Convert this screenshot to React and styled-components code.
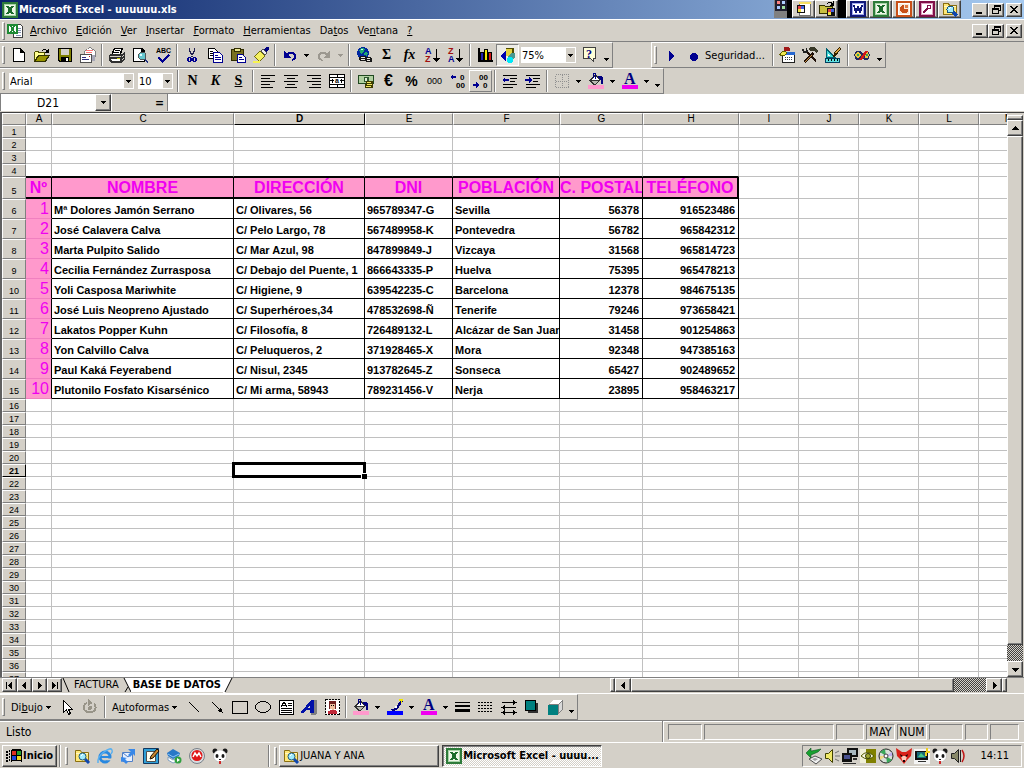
import styled, { createGlobalStyle, css } from 'styled-components'

const GlobalStyle = createGlobalStyle`
    * {
        box-sizing: border-box;
    }

    body {
        margin: 0;
        overflow: hidden;
        background: #d4d0c8;
        font-family: 'DejaVu Sans Condensed', 'DejaVu Sans', sans-serif;
        font-size: 11px;
        color: #000;
    }

    button, input, select {
        font: inherit;
        color: inherit;
        margin: 0;
        padding: 0;
        border: 0;
        border-radius: 0;
        background: transparent;
        outline: none;
    }
`

const raised = css`
    border: 1px solid;
    border-color: #fff #404040 #404040 #fff;
    box-shadow: inset -1px -1px 0 #808080;
`

const sunken = css`
    border: 1px solid;
    border-color: #808080 #fff #fff #808080;
`

const checker = css`
    background: repeating-conic-gradient(${(p) => p.$ink || '#404040'} 0 25%, ${(p) => p.$paper || '#d4d0c8'} 0 50%) 0 0 / 2px 2px;
`

const bucket = (
    <>
        <path d="M1 7l6-6 6 5-6 6H5z" fill="#303030" />
        <path d="M3 7l4-4 4 3-1 1z" fill="#fff" />
        <path d="M3 8h7l-3 3H6z" fill="#b8b8b0" />
        <path d="M5 0h3v6H7V1H6v4H5z" fill="#000080" />
        <path d="M10 3h3l2 2v6h-2V7l-3-2z" fill="#000080" />
    </>
)

const folderLens = (
    <>
        <path d="M1.500 2.500h5l1 2h7v9h-13z" fill="#ffe878" stroke="#8c7010" />
        <path d="M2 5h12v1H2z" fill="#fff8c8" />
        <path d="M11 11l4 4" stroke="#1048b0" strokeWidth="3" />
        <circle cx="8.500" cy="8.500" r="3.500" fill="#a0ecff" stroke="#205878" />
        <path d="M7 8l2-2" stroke="#fff" />
    </>
)

const art = {
    folderLens,
    excel: (
        <>
            <path d="M0 0h16v16H0z" fill="#2e7b3a" />
            <path d="M2.500 2.500h11v11h-11z" fill="#eef6e8" stroke="#a8d4a8" />
            <path d="M4 4h3l5 8H9z" fill="#1c6b2c" />
            <path d="M9 4h3l-5 8H4z" fill="#1c6b2c" />
        </>
    ),
    doc: (
        <>
            <path d="M6.500 1.500h7l2 2v11h-9z" fill="#fff" stroke="#404040" />
            <path d="M11 5h3v1h-3zM11 7h3v1h-3zM11 9h3v1h-3zM9 12h5v1H9z" fill="#8090b0" />
            <path d="M0 1h11v10H0z" fill="#1e8a34" />
            <path d="M2 3h7v6H2z" fill="#fff" />
            <path d="M3 3h2l3 6H6zM6 3h2L5 9H3z" fill="#1e8a34" />
        </>
    ),
    new: (
        <>
            <path d="M3 2h7l3 3v9H3z" fill="#fff" />
            <path d="M2 1h8v1h1v1h1v1h1v1h1v10H2zM3 2v12h10V6H9V2z" fill="#000" fillRule="evenodd" />
        </>
    ),
    open: (
        <>
            <path d="M0 5h1V4h4v1h6v4H4l-3 6H0z" fill="#505000" />
            <path d="M1 5h3v1h6v2H4l-3 5z" fill="#ffff90" />
            <path d="M4 8h12l-4 7H0z" fill="#303000" />
            <path d="M5 9h9l-3 5H2z" fill="#989400" />
            <path d="M8 3h1V2h3v1h1v1h-1V3H9v1H8z" fill="#000" />
            <path d="M15 1v5h-4v-1h1V4h1V3h1V2z" fill="#000" />
        </>
    ),
    save: (
        <>
            <path d="M1 1h14v14H2l-1-1z" fill="#000" />
            <path d="M2 2h12v12H3l-1-1z" fill="#808000" />
            <path d="M4 2h8v6H4z" fill="#d4d0c8" />
            <path d="M4 10h8v4H4z" fill="#000" />
            <path d="M9 11h2v3H9z" fill="#fff" />
        </>
    ),
    mail: (
        <>
            <path d="M4 4l6-4 6 4v6H4z" fill="#808080" />
            <path d="M5 4l5-3 5 3v5H5z" fill="#fff" />
            <path d="M6 3h7v1H6zM6 5h6v1H6z" fill="#ff7878" />
            <path d="M0 7h12v9H0z" fill="#505050" />
            <path d="M1 8h10v7H1z" fill="#fff" />
            <path d="M2 10h4v1H2zM2 12h7v1H2z" fill="#303080" />
            <path d="M9 9h1v1H9z" fill="#c02020" />
            <path d="M12 8h3v6h-3z" fill="#a8a8b8" />
        </>
    ),
    print: (
        <>
            <path d="M5 1h9l-2 7H2z" fill="#000" />
            <path d="M6 2h6l-1 5H4z" fill="#fff" />
            <path d="M6 3h5v1H6zM5 5h5v1H5z" fill="#000" />
            <path d="M0 8l2-1h11l2-2 1 1v6l-3 4H2l-2-3z" fill="#303030" />
            <path d="M1 9h11v1H1z" fill="#d4d0c8" />
            <path d="M2 12h9v2H3z" fill="#fff" />
            <path d="M8 11h3v1H8z" fill="#d0d000" />
            <path d="M13 9l2-2v1l-2 2zM13 12l2-2v1l-2 2z" fill="#d4d0c8" />
        </>
    ),
    preview: (
        <>
            <path d="M1 1h9l3 3v11H1z" fill="#000" />
            <path d="M2 2h7v3h3v9H2z" fill="#fff" />
            <path d="M12 11l4 4-1 1-4-4z" fill="#203080" />
            <path d="M8 5h4l2 2v4l-2 2H8l-2-2V7z" fill="#505858" />
            <path d="M8 6h4l1 1v4l-1 1H8l-1-1V7z" fill="#68c8d0" />
            <path d="M8 7h2v2H8z" fill="#e0ffff" />
        </>
    ),
    spell: <path d="M2 11l2-1 3 3 6-6 2 1-8 8z" fill="#000090" />,
    cut: (
        <>
            <path d="M5 1h1v3h1v2h1v2h1v2H8V9H7V7H6V5H5zM11 1h-1v3H9v2H8v2H7v2h1V9h1V7h1V5h1z" fill="#202050" />
            <path d="M4 10h3v1h1v3H7v1H4v-1H3v-3h1zM5 11v3h1v-3zM9 10h3v1h1v3h-1v1H9v-1H8v-3h1zM10 11v3h1v-3z" fill="#000090" fillRule="evenodd" />
        </>
    ),
    copy: (
        <>
            <path d="M1.500 1.500h6l3 3v7h-9z" fill="#fff" stroke="#000" />
            <path d="M3 4h3v1H3zM3 6h5v1H3zM3 8h5v1H3z" fill="#000" />
            <path d="M6.500 5.500h6l3 3v7h-9z" fill="#fff" stroke="#000090" />
            <path d="M8 8h3v1H8zM8 10h6v1H8zM8 12h6v1H8z" fill="#000090" />
        </>
    ),
    paste: (
        <>
            <path d="M1 2h13v12H1z" fill="#302c00" />
            <path d="M2 3h11v10H2z" fill="#787020" />
            <path d="M4 1h7v4H4z" fill="#302c00" />
            <path d="M5 2h5v2H5z" fill="#e8e490" />
            <path d="M7.500 7.500h5l3 3v5h-8z" fill="#fff" stroke="#000090" />
            <path d="M9 10h3v1H9zM9 12h5v1H9z" fill="#000090" />
        </>
    ),
    brush: (
        <>
            <path d="M1 9l6-5 5 5-6 6z" fill="#706c10" />
            <path d="M2 9l5-4 4 4-5 5z" fill="#f4f060" />
            <path d="M7 4l3-2 4 4-2 3z" fill="#505050" />
            <path d="M8 4l2-1 3 3-1 2z" fill="#f0f0f0" />
            <path d="M11 3l2-3h3v2l-3 3z" fill="#000080" />
            <path d="M0 14h7v2H0z" fill="#f8f450" />
        </>
    ),
    undo: <path d="M2 4v7h7l-3-3c2-2 6-1 6 1 0 2-1 3-3 4l1 1c4-1 5-4 4-6-1-3-6-5-9-2z" fill="#000090" />,
    redo: <path d="M14 4v7H7l3-3c-2-2-6-1-6 1 0 2 1 3 3 4l-1 1C2 13 1 10 2 8c1-3 6-5 9-2z" fill="#9c9890" />,
    globe: (
        <>
            <circle cx="7" cy="6" r="6" fill="#0028a0" />
            <path d="M3 3l3-2 3 1-1 3-3 2zM9 5l3 1-1 3-3-1z" fill="#20a870" />
            <path d="M5 2h2v1H5z" fill="#c0ffff" />
            <path d="M4 9h6v1h5v1h1v4h-6v-1H4v-1H3v-3h1z" fill="#181818" />
            <path d="M5 10h4v1H5zM5 12h4v1H5zM11 11h3v1h-3zM11 13h3v1h-3z" fill="#e8e4dc" />
        </>
    ),
    chart: (
        <>
            <path d="M1 1h2v12h13v2H1z" fill="#000" />
            <path d="M3 5h4v8H3zM7 2h4v11H7zM11 5h4v8h-4z" fill="#000" />
            <path d="M4 6h2v7H4z" fill="#2020b0" />
            <path d="M8 3h2v10H8z" fill="#f0e800" />
            <path d="M12 6h2v7h-2z" fill="#d01818" />
        </>
    ),
    drawing: (
        <>
            <path d="M6 1h8v8H6z" fill="#504c00" />
            <path d="M6 2h6v7H6z" fill="#e0d040" />
            <path d="M0 9l6-6v12z" fill="#0000b0" />
            <path d="M8 9l3-3h4v4l-3 3H8z" fill="#489890" />
            <circle cx="10" cy="13" r="3" fill="#00e8f8" />
        </>
    ),
    help: (
        <>
            <path d="M1 0h13v12h-2v4l-4-4H1z" fill="#404040" />
            <path d="M2 1h11v10h-2v3l-3-3H2z" fill="#ffffd8" />
        </>
    ),
    play: <path d="M6 4l5 5-5 5z" fill="#000090" />,
    dot: <circle cx="8" cy="10" r="4" fill="#000090" />,
    controls: (
        <>
            <path d="M3 5h13v11H3z" fill="#202020" />
            <path d="M4 6h11v9H4z" fill="#fff" />
            <path d="M4 5h12v3H4z" fill="#2868d0" />
            <path d="M6 10h1v1H6zM8 10h1v1H8zM10 10h1v1h-1zM12 10h1v1h-1zM6 12h1v1H6zM8 12h1v1H8zM10 12h1v1h-1zM12 12h1v1h-1z" fill="#404040" />
            <path d="M5 0h5v1h1v3H5z" fill="#a01818" />
            <path d="M0 7l3-3h4l1 2-3 3H1z" fill="#605c00" />
            <path d="M1 7l2-2h3l1 1-2 2H2z" fill="#f0e850" />
        </>
    ),
    tools: (
        <>
            <path d="M1 14l9-9 2 2-9 9zM3 4l2-1 9 10v2h-1z" fill="#201008" />
            <path d="M3 14l7-7v1l-7 7z" fill="#c89040" />
            <path d="M6 2l2-2h5l3 4-1 3-3-3h-3z" fill="#383828" />
            <path d="M0 2h2v2h2V1h1l1 3-2 2H1z" fill="#202020" />
        </>
    ),
    design: (
        <>
            <path d="M1 0l10 11H1z" fill="#006070" />
            <path d="M2 3l6 7H2z" fill="#40d8d8" />
            <path d="M3 7l2 2H3z" fill="#fff" />
            <path d="M0 11h15v5H0z" fill="#004060" />
            <path d="M1 12h13v3H1z" fill="#60e0e0" />
            <path d="M3 12h1v2H3zM6 12h1v2H6zM9 12h1v2H9zM12 12h1v2h-1z" fill="#000" />
            <path d="M8 10l1-4 5-6 2 2-5 7z" fill="#302000" />
            <path d="M10 6l4-5 1 1-4 5z" fill="#d8a040" />
        </>
    ),
    script: (
        <>
            <path d="M0 8l2-4h4l3 3 3-3h2l2 4-2 5h-4l-3-3-2 3H2z" fill="#202860" />
            <path d="M1 8l2-3h2l2 3-2 3H3zM11 8l1-3h2l1 3-1 3h-3z" fill="#e8c840" />
            <path d="M5 13l6-9h3l-6 9z" fill="#d01818" />
            <path d="M3 7h2v2H3zM12 7h2v2h-2z" fill="#30a060" />
        </>
    ),
    left: <path d="M1 2.500h14M1 5.500h9M1 8.500h14M1 11.500h9M1 14.500h12" stroke="#000" />,
    center: <path d="M1 2.500h14M4 5.500h8M1 8.500h14M4 11.500h8M2 14.500h12" stroke="#000" />,
    right: <path d="M1 2.500h14M6 5.500h9M1 8.500h14M6 11.500h9M3 14.500h12" stroke="#000" />,
    merge: (
        <>
            <path d="M.5 1.500h15v13H.5z" fill="#fff" stroke="#000" />
            <path d="M1 4.500h15M1 11.500h15M8.500 2v2M8.500 12v2" stroke="#000" />
            <path d="M1 7h2V6h1v1h1v1H4v2H3V8H1zM15 7h-2V6h-1v1h-1v1h1v2h1V8h2z" fill="#000" />
        </>
    ),
    money: (
        <>
            <path d="M0 2h16v9H0z" fill="#204820" />
            <path d="M1 3h14v7H1z" fill="#b0d0a0" />
            <path d="M6 4h5v5H6z" fill="#305830" />
            <path d="M7 5h2v3H7z" fill="#e0f0d8" />
            <path d="M8 8h7v7H7v-4h1z" fill="#403c00" />
            <path d="M9 9h4v1H9zM9 11h5v1H9zM8 13h5v1H8z" fill="#f0e860" />
        </>
    ),
    incDec: <path d="M0 4l3-3v2h3v2H3v2z" fill="#000090" />,
    decDec: <path d="M6 12L3 9v2H0v2h3v2z" fill="#000090" />,
    outdent: (
        <>
            <path d="M1 2.500h14M8 5.500h7M8 8.500h5M1 11.500h14M1 14.500h10" stroke="#000" />
            <path d="M0 7l3-3v2h4v2H3v2z" fill="#000090" />
        </>
    ),
    indent: (
        <>
            <path d="M1 2.500h14M8 5.500h7M8 8.500h5M1 11.500h14M1 14.500h10" stroke="#000" />
            <path d="M7 7L4 4v2H0v2h4v2z" fill="#000090" />
        </>
    ),
    borders: <path d="M1.500 1.500h13v13h-13zM8.500 2v12M2 8.500h12" fill="none" stroke="#909090" strokeDasharray="1 1" />,
    fill: (
        <>
            {bucket}
            <path d="M0 12h16v4H0z" fill="#ff99cc" />
        </>
    ),
    fontColor: <path d="M0 12h16v4H0z" fill="#f000f0" />,
    lineColor: (
        <>
            <path d="M3 11l5-2 6-8 2 1-6 9-4 1z" fill="#000080" />
            <path d="M8 7h2v2H8z" fill="#fff" />
            <path d="M12 0h4v2h-1v2h-1V2h-2z" fill="#f0e800" />
            <path d="M0 12h16v4H0z" fill="#0000ff" />
        </>
    ),
    cursor: <path d="M4.500 1.500v12l3-3 2 5 2-1-2-4h4z" fill="#fff" stroke="#000" />,
    rotate: (
        <>
            <path d="M5 4a6 5 0 1 0 7 1" fill="none" stroke="#989488" strokeWidth="2" />
            <path d="M6 0l5 4-5 3z" fill="#989488" />
            <circle cx="8" cy="9" r="2" fill="#989488" />
        </>
    ),
    line: <path d="M3 3l10 10" stroke="#000" />,
    arrow: (
        <>
            <path d="M3 3l8 8" stroke="#000" />
            <path d="M14 14l-6-2 4-4z" fill="#000" />
        </>
    ),
    rect: <path d="M.5 2.500h15v12H.5z" fill="none" stroke="#000" />,
    oval: <ellipse cx="8" cy="8" rx="7.500" ry="5.500" fill="none" stroke="#000" />,
    textbox: (
        <>
            <path d="M1.500 1.500h14v14h-14z" fill="#fff" stroke="#000" />
            <path d="M3 8V6h1V4h1V3h2v1h1v2h1v2H8V7H4v1zM5 5h2v1H5zM10 4h4v1h-4zM10 6h4v1h-4zM3 9h11v1H3zM3 11h11v1H3zM3 13h11v1H3z" fill="#000" fillRule="evenodd" />
        </>
    ),
    wordart: (
        <>
            <path d="M13 1h3v13l-2 2h-4z" fill="#808080" />
            <path d="M0 13L10 1h3v13h-4v-3H5l-2 3H0z" fill="#0010a8" />
            <path d="M7 9h2V6z" fill="#d4d0c8" />
        </>
    ),
    clip: (
        <>
            <path d="M1.500.5h14v15h-14z" fill="#fff" stroke="#000" strokeDasharray="2 1" />
            <path d="M5 2h7v8H5z" fill="#702020" />
            <path d="M6 5h5v5l-2 1-3-1z" fill="#f0c0a0" />
            <path d="M7 6h1v1H7zM9 6h1v1H9z" fill="#000" />
            <path d="M4 12l3-1h3l3 1v3H4z" fill="#c02838" />
        </>
    ),
    weight: <path d="M0 3h15v1H0zM0 6h15v2H0zM0 10h15v3H0z" fill="#000" />,
    dashes: <path d="M0 3.500h15M0 6.500h15M0 9.500h15M0 12.500h15" stroke="#000" strokeDasharray="2 1" />,
    arrows: (
        <>
            <path d="M1 3h12v1H1zM3 8h12v1H3zM1 13h14v1H1z" fill="#000" />
            <path d="M12 1l4 2.500-4 2.500zM4 6L0 8.500 4 11zM12 11l4 2.500-4 2.500zM4 11l-4 2.500L4 16z" fill="#000" />
        </>
    ),
    shadow: (
        <>
            <path d="M4 4h10v10H4z" fill="#303030" />
            <path d="M1.500 1.500h10v10h-10z" fill="#008080" stroke="#000" />
        </>
    ),
    cube: (
        <>
            <path d="M1 6l5-5h10v9l-5 6H1z" fill="#808080" />
            <path d="M2 5l4-4h9l-4 4z" fill="#fff" />
            <path d="M12 6l3-4v8l-3 4z" fill="#d8d8d8" />
            <path d="M1 6h10v10H1z" fill="#008080" />
        </>
    ),
    office: (
        <>
            <path d="M1 0h12v11H1z" fill="#202030" />
            <path d="M3 1h3v3H3z" fill="#ff8080" />
            <path d="M8 1h3v3H8z" fill="#b0d0ff" />
            <path d="M3 6h3v3H3z" fill="#a8c8ff" />
            <path d="M8 6h3v3H8z" fill="#a0e0a0" />
        </>
    ),
    newOffice: (
        <>
            <path d="M3 1h12v14H3z" fill="#707070" />
            <path d="M4 2h10v12H4z" fill="#fff" />
            <path d="M3 1h12v2H3z" fill="#f8e060" />
            <path d="M1 4h8v8H1z" fill="#101010" />
            <path d="M2 5h3v3H2z" fill="#e04040" />
            <path d="M5 5h3v3H5z" fill="#4060e0" />
            <path d="M2 8h3v3H2z" fill="#f0e040" />
            <path d="M5 8h3v3H5z" fill="#f8f8f8" />
        </>
    ),
    openOffice: (
        <>
            <path d="M0 4h5l1 1h8v8H0z" fill="#303000" />
            <path d="M1 5h4l1 1h7v6H1z" fill="#c8c040" />
            <path d="M8 7h8v8H8z" fill="#101010" />
            <path d="M9 8h3v3H9z" fill="#e04040" />
            <path d="M12 8h3v3h-3z" fill="#4060e0" />
            <path d="M9 11h3v3H9z" fill="#f0e040" />
            <path d="M8 3V2h1V1h4v1h1V0h1v5h-4V4h1V2H9v1z" fill="#000" />
        </>
    ),
    word: (
        <>
            <path d="M0 0h16v16H0z" fill="#101878" />
            <path d="M2.500 2.500h11v11h-11z" fill="#fff" stroke="#a0a8f0" />
            <path d="M3 4h2l1 5 1-4h2l1 4 1-5h2l-2 8H9L8 8l-1 4H5z" fill="#101878" />
        </>
    ),
    power: (
        <>
            <path d="M0 0h16v16H0z" fill="#c85018" />
            <path d="M2.500 2.500h11v11h-11z" fill="#f8e8d8" stroke="#fff" />
            <path d="M8 4H6L4 6v4l2 2h4l2-2V8H8z" fill="#c85018" />
            <path d="M9 4h2l1 1v2H9z" fill="#e07840" />
        </>
    ),
    access: (
        <>
            <path d="M0 0h16v16H0z" fill="#801048" />
            <path d="M2.500 2.500h11v11h-11z" fill="#fff" stroke="#e0a0c0" />
            <path d="M8 4h4v4H9l-3 4H4v-2l4-4zM9 5v2h2V5z" fill="#801048" fillRule="evenodd" />
        </>
    ),
    windows: (
        <>
            <path d="M0 3h2v2H0zM0 6h2v2H0zM0 9h2v2H0zM0 12h2v2H0zM3 2h1v2H3zM3 5h1v2H3zM3 8h1v2H3zM3 11h1v2H3z" fill="#000" />
            <path d="M5 2q5-3 11 0v12q-6-3-11 0z" fill="#000" />
            <path d="M6 3h4v4H6z" fill="#e03020" />
            <path d="M11 3h4v4h-4z" fill="#20a030" />
            <path d="M6 8h4v4H6z" fill="#2048e0" />
            <path d="M11 8h4v4h-4z" fill="#f0d820" />
        </>
    ),
    ie: (
        <>
            <circle cx="8" cy="9" r="5" fill="none" stroke="#2888e0" strokeWidth="3" />
            <path d="M4 8h9v2H4z" fill="#2888e0" />
            <path d="M10 10.500h6v1.800h-6z" fill="#d4d0c8" />
            <path d="M1 15Q0 9 7 4t8-2q1 2-1 4" fill="none" stroke="#58b0f0" strokeWidth="1.500" />
        </>
    ),
    outlook: (
        <>
            <path d="M2.500 4.500h10v9h-10z" fill="#e8f0ff" stroke="#5080c8" />
            <path d="M3 5l5 4 5-4" fill="none" stroke="#5080c8" />
            <path d="M8 1h7v7l-2-2-3 3-2-2 3-3zM1 9l6 1-2 1 3 3-2 2-3-3-2 1z" fill="#3888e8" />
        </>
    ),
    desktop: (
        <>
            <path d="M.5.5h15v15H.5z" fill="#30a0d8" stroke="#103860" />
            <path d="M3.500 3.500h9v10h-9z" fill="#fffff0" stroke="#505050" />
            <path d="M7 11l1-3 6-7 2 2-6 7z" fill="#c88830" stroke="#201000" />
        </>
    ),
    player: (
        <>
            <path d="M1 5l6-4 7 4-1 3-6 3-5-3z" fill="#2878c8" />
            <path d="M2 6l5 3 6-3" fill="none" stroke="#90c8f8" />
            <path d="M2 9l5 3 5-3v4l-5 2-5-3z" fill="#fff" stroke="#80a0c0" />
            <circle cx="12" cy="12" r="3.500" fill="#30a040" />
            <path d="M11 10l3 2-3 2z" fill="#fff" />
        </>
    ),
    nero: (
        <>
            <circle cx="8" cy="8" r="7.500" fill="#d8dce0" stroke="#788088" />
            <circle cx="8" cy="7.500" r="5.500" fill="#e01818" />
            <path d="M4 9l2-4 2 3 2-3 2 4" stroke="#fff" fill="none" strokeWidth="1.500" />
        </>
    ),
    panda: (
        <>
            <circle cx="3" cy="3" r="2.500" fill="#181818" />
            <circle cx="13" cy="3" r="2.500" fill="#181818" />
            <ellipse cx="8" cy="8" rx="6.500" ry="6" fill="#fff" stroke="#b0b0b0" strokeWidth=".5" />
            <ellipse cx="5" cy="8" rx="1.500" ry="2" fill="#181818" />
            <ellipse cx="11" cy="8" rx="1.500" ry="2" fill="#181818" />
            <path d="M7 11h2v1H7z" fill="#181818" />
            <path d="M7 13h2v3H7z" fill="#d02828" />
        </>
    ),
    eject: (
        <>
            <path d="M3 11l6-3 7 3-6 5z" fill="#f0f0f0" stroke="#505050" />
            <path d="M6 11l3-1 3 1-3 2z" fill="#a0a0a0" />
            <path d="M0 5l5-5v3l10-2-3 3-7 3v3z" fill="#18a030" stroke="#004010" strokeWidth=".5" />
        </>
    ),
    volume: (
        <>
            <path d="M1.500 5.500h3l4-4v13l-4-4h-3z" fill="#f0e868" stroke="#404000" />
            <path d="M11 5l4-2M11 8h5M11 11l4 2" stroke="#707070" />
        </>
    ),
    network: (
        <>
            <path d="M5 0h11v9H5z" fill="#101010" />
            <path d="M7 2h7v5H7z" fill="#a8b8c0" />
            <path d="M0 5h10v9H0z" fill="#101010" />
            <path d="M2 7h6v4H2z" fill="#485090" />
            <path d="M1 15h13v1H1zM11 10h4v2h-4z" fill="#303030" />
        </>
    ),
    nvidia: (
        <>
            <path d="M0 1h16v14H0z" fill="#808000" />
            <path d="M0 1h6v14H0z" fill="#f0f0d8" />
            <path d="M1 8q6-7 13 0-6 6-13 0z" fill="#f8f8e0" stroke="#505800" />
            <circle cx="8" cy="8" r="2.500" fill="#a0a830" stroke="#303800" />
        </>
    ),
    cd: (
        <>
            <circle cx="8" cy="8" r="7" fill="#d8e0d8" stroke="#202020" />
            <path d="M8 8L2 4l5-3zM8 8l6 4-5 3z" fill="#38a858" />
            <path d="M8 8l6-4v4z" fill="#c0b0f0" />
            <path d="M8 8l-6 4V8z" fill="#f0d880" />
            <circle cx="8" cy="8" r="2" fill="#fff" stroke="#404040" />
        </>
    ),
    fox: (
        <>
            <path d="M0 0l6 4h4l6-4-1 8-4 4-3 4-3-4-4-4z" fill="#d82018" />
            <path d="M5 8h6l-1 4-2 2-2-2z" fill="#ffc8b8" />
            <path d="M4 6l3 2-2 1zM12 6L9 8l2 1zM7 12h2v2H7z" fill="#180000" />
        </>
    ),
    monitor: (
        <>
            <path d="M0 1h16v15H0z" fill="#f4f4f4" />
            <path d="M1 3h13v9H1z" fill="#101010" />
            <path d="M3 4h9v6H3z" fill="#186878" />
            <path d="M4 9l3-4 4 4z" fill="#48c888" />
            <path d="M12 0h2v3h2v2h-3v3h-2V4h1z" fill="#f0d020" />
            <path d="M4 13h8v1H4z" fill="#303030" />
        </>
    ),
    sound: (
        <>
            <path d="M1.500 5.500h3l4-4v13l-4-4h-3z" fill="#888868" stroke="#202020" />
            <path d="M10.500 2v12" stroke="#202020" />
            <path d="M12 2q4 6 0 12" fill="none" stroke="#c01818" strokeWidth="1.500" />
        </>
    ),
    minimize: <path d="M4 10h6v2H4z" fill="#000" />,
    restore: <path d="M6 3h7v6h-2v3H4V6h2zM7 5v1h4v2h1V5zM5 8v3h5V8z" fill="#000" fillRule="evenodd" />,
    close: <path d="M4 4h2v1h1v1h2v-1h1v-1h2v1h-1v1h-1v1h-1v1h1v1h1v1h1v1h-2v-1h-1v-1h-2v1h-1v1h-2v-1h1v-1h1v-1h1v-1h-1v-1h-1v-1h-1z" fill="#000" />,
    sortAsc: <path d="M11 2h1v9h3l-3 4h-1l-3-4h3z" fill="#000" />,
    sortDesc: <path d="M11 2h1v9h3l-3 4h-1l-3-4h3z" fill="#000" />,
}

// letters that belong to an icon are drawn as plain svg text
const letters = {
    spell: [['ABC', 1, 6, 7, '#000', 'Sans']],
    help: [['?', 4, 11, 12, '#000080', 'Serif']],
    fontColor: [['A', 2, 11, 16, '#000080', 'Serif']],
    incDec: [['0', 10, 7, 8, '#000', 'Sans'], ['00', 6, 15, 8, '#000', 'Sans']],
    decDec: [['00', 6, 7, 8, '#000', 'Sans'], ['0', 10, 15, 8, '#000', 'Sans']],
    sortAsc: [['A', 0, 7, 9, '#000090', 'Sans'], ['Z', 0, 15, 9, '#a01010', 'Sans']],
    sortDesc: [['Z', 0, 7, 9, '#a01010', 'Sans'], ['A', 0, 15, 9, '#000090', 'Sans']],
    merge: [['a', 6, 10, 7, '#000', 'Sans']],
}

function Icon({ name, soft }) {
    return (
        <Svg viewBox="0 0 16 16" aria-hidden="true" $soft={soft}>
            {art[name]}
            {(letters[name] || []).map(([text, x, y, size, color, face]) => (
                <text key={x + '-' + y} x={x} y={y} fontSize={size} fill={color} fontWeight="bold" fontFamily={`Liberation ${face}`}>
                    {text}
                </text>
            ))}
        </Svg>
    )
}

const menus = [
    ['', 'A', 'rchivo'],
    ['', 'E', 'dición'],
    ['', 'V', 'er'],
    ['', 'I', 'nsertar'],
    ['', 'F', 'ormato'],
    ['', 'H', 'erramientas'],
    ['Da', 't', 'os'],
    ['Ve', 'n', 'tana'],
    ['', '?', ''],
]

const standardBar = ['new', 'open', 'save', 'mail', '|', 'print', 'preview', 'spell', '|', 'cut', 'copy', 'paste', 'brush', '|', 'undo', 'v', 'redo', 'v-', '|', 'globe', '#Σ', '#fx', 'sortAsc', 'sortDesc', '|', 'chart', '!drawing']
const formatBar = ['|', '#N', '#K', '#S', '|', 'left', 'center', 'right', 'merge', '|', 'money', '#€', '#%', '#000', 'incDec', '+decDec', '|', 'outdent', 'indent', '|', 'borders', 'v', 'fill', 'v', 'fontColor', 'v', 'more']
const drawBar = ['line', 'arrow', 'rect', 'oval', 'textbox', 'wordart', 'clip', '|', 'fill', 'v', 'lineColor', 'v', 'fontColor', 'v', 'weight', 'dashes', 'arrows', 'shadow', 'cube', 'more']
const quickLaunch = ['folderLens', 'ie', 'outlook', 'desktop', 'player', 'nero', 'panda']
const trayIcons = ['eject', 'volume', 'network', 'nvidia', 'cd', 'fox', 'monitor', 'panda', 'sound']

const glyphStyles = {
    N: { weight: 'bold' },
    K: { weight: 'bold', slant: 'italic' },
    S: { weight: 'bold', line: 'underline' },
    'Σ': { weight: 'bold' },
    fx: { slant: 'italic', weight: 'bold' },
    '€': { size: 16, weight: 'bold', sans: true },
    '%': { weight: 'bold', sans: true },
    '000': { size: 9, sans: true },
}

const Caret = ({ dim }) => (
    <CaretSvg viewBox="0 0 5 3" aria-hidden="true">
        <path d="M0 0h5v1H4v1H3v1H2V2H1V1H0z" fill={dim ? '#9c9890' : '#000'} />
    </CaretSvg>
)

function Tools({ items }) {
    return items.map((item, i) => {
        if (item === '|') return <Divider key={i} />
        if (item === 'more') return <Drop key={i} $low aria-label="Más botones"><Caret /></Drop>
        if (item[0] === 'v') return <Drop key={i} aria-label="Opciones"><Caret dim={item === 'v-'} /></Drop>
        if (item[0] === '#') {
            const text = item.slice(1)
            const look = glyphStyles[text]
            return (
                <Tool key={i}>
                    <Letter $size={look.size} $weight={look.weight} $slant={look.slant} $line={look.line} $sans={look.sans}>{text}</Letter>
                </Tool>
            )
        }
        const name = item.replace(/^[!+]/, '')
        return (
            <Tool key={i} aria-label={name} $pressed={item[0] === '!'} $hover={item[0] === '+'}>
                <Icon name={name} />
            </Tool>
        )
    })
}

function Combo({ label, value, width }) {
    return (
        <ComboBox $width={width}>
            <select aria-label={label} defaultValue={value}>
                <option>{value}</option>
            </select>
            <ComboArrow><Caret /></ComboArrow>
        </ComboBox>
    )
}

const WindowButtons = ({ target }) => (
    <WindowGroup>
        <SmallButton aria-label={`Minimizar ${target}`}><Icon name="minimize" /></SmallButton>
        <SmallButton aria-label={`Restaurar ${target}`}><Icon name="restore" /></SmallButton>
        <SmallButton $gap aria-label={`Cerrar ${target}`}><Icon name="close" /></SmallButton>
    </WindowGroup>
)

const Arrow = ({ dir }) => {
    const shapes = {
        up: 'M4 2h1v1h1v1h1v1h1v1H1V5h1V4h1V3h1z',
        down: 'M1 3h7v1H7v1H6v1H5v1H4V6H3V5H2V4H1z',
        left: 'M6 1v7H5V7H4V6H3V5H2V4h1V3h1V2h1V1z',
        right: 'M3 1v7h1V7h1V6h1V5h1V4H6V3H5V2H4V1z',
        first: 'M1 1h1v7H1zM7 1v7H6V7H5V6H4V5H3V4h1V3h1V2h1V1z',
        last: 'M7 1h1v7H7zM2 1v7h1V7h1V6h1V5h1V4H5V3H4V2H3V1z',
    }
    return <ArrowSvg viewBox="0 0 9 9" aria-hidden="true"><path d={shapes[dir]} /></ArrowSvg>
}

const columns = [
    ['A', 26],
    ['C', 182],
    ['D', 131],
    ['E', 88],
    ['F', 107],
    ['G', 83],
    ['H', 96],
    ['I', 60],
    ['J', 60],
    ['K', 60],
    ['L', 60],
    ['M', 60],
]

const headings = ['Nº', 'NOMBRE', 'DIRECCIÓN', 'DNI', 'POBLACIÓN', 'C. POSTAL', 'TELÉFONO']

const people = [
    ['Mª Dolores Jamón Serrano', 'C/ Olivares, 56', '965789347-G', 'Sevilla', '56378', '916523486'],
    ['José Calavera Calva', 'C/ Pelo Largo, 78', '567489958-K', 'Pontevedra', '56782', '965842312'],
    ['Marta Pulpito Salido', 'C/ Mar Azul, 98', '847899849-J', 'Vizcaya', '31568', '965814723'],
    ['Cecilia Fernández Zurrasposa', 'C/ Debajo del Puente, 1', '866643335-P', 'Huelva', '75395', '965478213'],
    ['Yoli Casposa Mariwhite', 'C/ Higiene, 9', '639542235-C', 'Barcelona', '12378', '984675135'],
    ['José Luis Neopreno Ajustado', 'C/ Superhéroes,34', '478532698-Ñ', 'Tenerife', '79246', '973658421'],
    ['Lakatos Popper Kuhn', 'C/ Filosofía, 8', '726489132-L', 'Alcázar de San Juan', '31458', '901254863'],
    ['Yon Calvillo Calva', 'C/ Peluqueros, 2', '371928465-X', 'Mora', '92348', '947385163'],
    ['Paul Kaká Feyerabend', 'C/ Nisul, 2345', '913782645-Z', 'Sonseca', '65427', '902489652'],
    ['Plutonilo Fosfato Kisarsénico', 'C/ Mi arma, 58943', '789231456-V', 'Nerja', '23895', '958463217'],
]

const rowNumbers = Array.from({ length: 37 }, (_, i) => i + 1)

function SheetCell({ row, col }) {
    const inTable = col < 7
    if (row === 5 && inTable) return <HeadCell $last={col === 6}>{headings[col]}</HeadCell>
    if (row > 5 && row < 16 && inTable) {
        if (col === 0) return <NumberCell>{row - 5}</NumberCell>
        return <DataCell $right={col > 4}>{people[row - 6][col - 1]}</DataCell>
    }
    if (row === 21 && col === 2) return <SelectedCell><Selection /></SelectedCell>
    return <Cell $edge={row === 4 && inTable} />
}

function Sheet() {
    return (
        <SheetArea>
            <GridView>
                <Grid>
                    <colgroup>
                        <Col $width={24} />
                        {columns.map(([name, width]) => <Col key={name} $width={width} />)}
                    </colgroup>
                    <thead>
                        <Row $height={12}>
                            <ColHead />
                            {columns.map(([name]) => <ColHead key={name} scope="col" $active={name === 'D'}>{name}</ColHead>)}
                        </Row>
                    </thead>
                    <tbody>
                        {rowNumbers.map((n) => (
                            <Row key={n} $height={n === 5 ? 22 : n > 5 && n < 16 ? 20 : 13}>
                                <RowHead scope="row" $active={n === 21} $tall={n > 4 && n < 16}>{n}</RowHead>
                                {columns.map(([name], i) => <SheetCell key={name} row={n} col={i} />)}
                            </Row>
                        ))}
                    </tbody>
                </Grid>
            </GridView>
            <VerticalScroll>
                <SplitBox />
                <ScrollButton aria-label="Subir"><Arrow dir="up" /></ScrollButton>
                <Thumb />
                <Track />
                <ScrollButton aria-label="Bajar"><Arrow dir="down" /></ScrollButton>
            </VerticalScroll>
        </SheetArea>
    )
}

function App() {
    return (
        <Screen>
            <GlobalStyle />
            <TitleBar>
                <Icon name="excel" />
                <Title>Microsoft Excel - uuuuuu.xls</Title>
                <OfficeBar>
                    <OfficeGrip><Icon name="office" /></OfficeGrip>
                    <OfficeButton aria-label="Nuevo documento"><Icon name="newOffice" /></OfficeButton>
                    <OfficeButton aria-label="Abrir documento"><Icon name="openOffice" /></OfficeButton>
                    <OfficeGap />
                    {['word', 'excel', 'power', 'access', 'folderLens'].map((name) => (
                        <OfficeButton key={name} aria-label={name}><Icon name={name} /></OfficeButton>
                    ))}
                </OfficeBar>
                <WindowButtons target="Excel" />
            </TitleBar>
            <MenuBar>
                <Grip />
                <Icon name="doc" />
                <Menus>
                    {menus.map(([before, key, after]) => (
                        <MenuItem key={before + key + after}>{before}<u>{key}</u>{after}</MenuItem>
                    ))}
                </Menus>
                <WindowButtons target="libro" />
            </MenuBar>
            <BarRow>
                <Toolbar>
                    <Grip />
                    <Tools items={standardBar} />
                    <Combo label="Zoom" value="75%" width={55} />
                    <Tools items={['help', 'more']} />
                </Toolbar>
                <Toolbar $apart>
                    <Grip />
                    <Tools items={['play', 'dot']} />
                    <TextTool>Seguridad...</TextTool>
                    <Tools items={['|', 'controls', 'tools', 'design', '|', 'script', 'more']} />
                </Toolbar>
            </BarRow>
            <BarRow>
                <Toolbar>
                    <Grip />
                    <Combo label="Fuente" value="Arial" width={125} />
                    <Combo label="Tamaño de fuente" value="10" width={35} />
                    <Tools items={formatBar} />
                </Toolbar>
            </BarRow>
            <FormulaBar>
                <NameBox aria-label="Cuadro de nombres" defaultValue="D21" />
                <NameButton aria-label="Lista de nombres"><Caret /></NameButton>
                <EqualsButton>=</EqualsButton>
                <FormulaInput aria-label="Barra de fórmulas" />
            </FormulaBar>
            <Sheet />
            <TabBar>
                {['first', 'left', 'right', 'last'].map((dir) => (
                    <TabArrow key={dir} aria-label={dir}><Arrow dir={dir} /></TabArrow>
                ))}
                <TabEdge viewBox="0 0 10 15" aria-hidden="true"><path d="M1 0l6 14" /></TabEdge>
                <Tab>FACTURA</Tab>
                <TabEdge viewBox="0 0 10 15" aria-hidden="true">
                    <path d="M3 0h7v15z" className="paper" />
                    <path d="M3 0l7 14M7 9l-3 5" />
                </TabEdge>
                <Tab $active>BASE DE DATOS</Tab>
                <TabEdge viewBox="0 0 10 15" aria-hidden="true">
                    <path d="M0 0h9L2 15H0z" className="paper" />
                    <path d="M9 0L2 14" />
                </TabEdge>
                <TabSpace />
                <Sash />
                <ScrollSide>
                    <ScrollButton aria-label="Izquierda"><Arrow dir="left" /></ScrollButton>
                    <Thumb />
                    <Track $wide />
                    <ScrollButton aria-label="Derecha"><Arrow dir="right" /></ScrollButton>
                    <Sash />
                </ScrollSide>
            </TabBar>
            <BarRow $tall>
                <Toolbar>
                    <Grip />
                    <TextTool>Di<u>b</u>ujo <Caret /></TextTool>
                    <Tools items={['cursor', 'rotate', '|']} />
                    <TextTool>A<u>u</u>toformas <Caret /></TextTool>
                    <Tools items={drawBar} />
                </Toolbar>
            </BarRow>
            <StatusBar>
                <StatusText>Listo</StatusText>
                <Divider />
                <StatusBox $width={34} />
                <StatusBox $width={130} />
                <StatusBox $width={28} />
                <StatusBox $width={29}>MAY</StatusBox>
                <StatusBox $width={30}>NUM</StatusBox>
                <StatusBox $width={34} />
                <StatusBox $width={23} />
                <StatusBox $width={29} />
            </StatusBar>
            <Taskbar>
                <StartButton><Icon name="windows" />Inicio</StartButton>
                <Divider />
                <Grip />
                <QuickLaunch>
                    {quickLaunch.map((name) => <Tool key={name} aria-label={name}><Icon name={name} soft /></Tool>)}
                </QuickLaunch>
                <Divider />
                <Grip />
                <TaskButton><Icon name="folderLens" soft />JUANA Y ANA</TaskButton>
                <TaskButton $active $ink="#fff"><Icon name="excel" />Microsoft Excel - uuuu...</TaskButton>
                <Tray>
                    {trayIcons.map((name) => <Icon key={name} name={name} soft />)}
                    <Clock>14:11</Clock>
                </Tray>
            </Taskbar>
        </Screen>
    )
}

const Screen = styled.div`
    display: flex;
    flex-direction: column;
    height: 100vh;
    overflow: hidden;
    background: #d4d0c8;
`

const Svg = styled.svg`
    width: 16px;
    height: 16px;
    flex: none;
    overflow: visible;
    shape-rendering: ${(p) => (p.$soft ? 'auto' : 'crispEdges')};
`

const CaretSvg = styled.svg`
    width: 5px;
    height: 3px;
    flex: none;
    shape-rendering: crispEdges;
`

const ArrowSvg = styled.svg`
    width: 9px;
    height: 9px;
    flex: none;
    shape-rendering: crispEdges;
`

const TitleBar = styled.header`
    display: flex;
    align-items: center;
    flex: none;
    height: 19px;
    padding: 0 2px;
    background: linear-gradient(to right, #0a246a, #a6caf0);
`

const Title = styled.h1`
    flex: 1;
    margin: 0 0 0 1px;
    font-size: 11px;
    line-height: 18px;
    color: #fff;
`

const OfficeBar = styled.div`
    display: flex;
    align-self: flex-start;
    height: 18px;
    margin-right: 11px;
    background: #000;
`

const OfficeGrip = styled.div`
    display: flex;
    width: 13px;
    margin-right: 5px;
    overflow: hidden;
    background: #808080;
`

const OfficeGap = styled.div`
    width: 8px;
`

const OfficeButton = styled.button`
    ${raised}
    display: flex;
    align-items: center;
    justify-content: center;
    width: 23px;
    background: #d4d0c8;
`

const WindowGroup = styled.div`
    display: flex;
`

const SmallButton = styled.button`
    ${raised}
    display: flex;
    align-items: center;
    justify-content: center;
    width: 16px;
    height: 14px;
    margin-left: ${(p) => (p.$gap ? 2 : 0)}px;
    background: #d4d0c8;
`

const MenuBar = styled.nav`
    display: flex;
    align-items: center;
    flex: none;
    height: 23px;
    padding-right: 2px;
    border-top: 1px solid #fff;
    border-bottom: 1px solid #808080;
`

const Menus = styled.div`
    display: flex;
    flex: 1;
    padding-left: 3px;
`

const MenuItem = styled.button`
    padding: 0 4px;
    margin-right: 1px;
    line-height: 18px;
`

const Grip = styled.div`
    flex: none;
    width: 3px;
    height: 18px;
    margin: 0 2px;
    border: 1px solid;
    border-color: #fff #808080 #808080 #fff;
`

const Divider = styled.div`
    flex: none;
    width: 2px;
    height: 22px;
    margin: 0 2px;
    border-left: 1px solid #808080;
    border-right: 1px solid #fff;
`

const BarRow = styled.div`
    display: flex;
    flex: none;
    height: ${(p) => (p.$tall ? 27 : 26)}px;
    border-bottom: ${(p) => (p.$tall ? '1px solid #808080' : '0')};
`

const Toolbar = styled.div`
    display: flex;
    align-items: center;
    margin-left: ${(p) => (p.$apart ? 38 : 0)}px;
    border: 1px solid;
    border-color: #fff #808080 #808080 ${(p) => (p.$apart ? '#fff' : 'transparent')};
    border-left-width: ${(p) => (p.$apart ? 1 : 0)}px;
`

const Tool = styled.button`
    display: flex;
    align-items: center;
    justify-content: center;
    flex: none;
    width: 23px;
    height: 22px;
    ${(p) => p.$hover && css`
        border: 1px solid;
        border-color: #fff #808080 #808080 #fff;
    `}
    ${(p) => p.$pressed && css`
        ${sunken}
        background: #ecebe6;
    `}
`

const Drop = styled.button`
    display: flex;
    align-items: center;
    justify-content: center;
    flex: none;
    width: 11px;
    height: 22px;
    padding-top: ${(p) => (p.$low ? 9 : 0)}px;
`

const Letter = styled.span`
    font-family: ${(p) => (p.$sans ? "'Liberation Sans', sans-serif" : "'Liberation Serif', serif")};
    font-size: ${(p) => p.$size || 14}px;
    font-weight: ${(p) => p.$weight || 'normal'};
    font-style: ${(p) => p.$slant || 'normal'};
    text-decoration: ${(p) => p.$line || 'none'};
`

const TextTool = styled.button`
    display: flex;
    align-items: center;
    height: 22px;
    padding: 0 5px 0 0;
    white-space: pre;

    ${Grip} + &, ${Divider} + & {
        padding-left: 4px;
    }
`

const ComboBox = styled.div`
    display: flex;
    flex: none;
    width: ${(p) => p.$width}px;
    height: 16px;
    margin: 0 2px;
    background: #fff;

    select {
        flex: 1;
        min-width: 0;
        padding-left: 1px;
        appearance: none;
    }
`

const ComboArrow = styled.span`
    display: flex;
    align-items: center;
    justify-content: center;
    width: 11px;
    border: 1px solid #fff;
    background: #d4d0c8;
    pointer-events: none;
`

const FormulaBar = styled.div`
    display: flex;
    flex: none;
    height: 18px;
    padding-bottom: 1px;
    background: #d4d0c8;
`

const NameBox = styled.input`
    width: 95px;
    padding: 0;
    border-left: 1px solid #808080;
    background: #fff;
    font-size: 12px;
    text-align: center;
`

const NameButton = styled.button`
    ${raised}
    display: flex;
    align-items: center;
    justify-content: center;
    width: 16px;
    background: #d4d0c8;
`

const EqualsButton = styled.button`
    width: 57px;
    padding-right: 3px;
    border-left: 1px solid #fff;
    border-right: 1px solid #808080;
    font-size: 12px;
    font-weight: bold;
    text-align: right;
`

const FormulaInput = styled.input`
    flex: 1;
    min-width: 0;
    background: #fff;
`

const SheetArea = styled.main`
    display: flex;
    flex: 1;
    min-height: 0;
    padding-right: 1px;
    border-top: 1px solid #404040;
    border-left: 2px solid #606060;
`

const GridView = styled.div`
    flex: 1;
    min-width: 0;
    overflow: hidden;
    background: #fff;
`

const Grid = styled.table`
    width: 100%;
    table-layout: fixed;
    border-collapse: separate;
    border-spacing: 0;
    font-family: 'Liberation Sans', Arial, sans-serif;
`

const Col = styled.col`
    width: ${(p) => p.$width}px;
`

const Row = styled.tr`
    height: ${(p) => p.$height}px;
`

const headLook = css`
    padding: 0;
    overflow: hidden;
    border: 1px solid;
    border-color: #fff #808080 #808080 #fff;
    background: #d4d0c8;
    text-align: center;
    font-weight: normal;

    ${(p) => p.$active && css`
        border-right-color: #000;
        border-bottom-color: #000;
        font-weight: bold;
    `}
`

const ColHead = styled.th`
    ${headLook}
    font-size: 10px;
    line-height: 10px;
`

const RowHead = styled.th`
    ${headLook}
    padding-bottom: ${(p) => (p.$tall ? 2 : 0)}px;
    font-size: 9px;
    line-height: 10px;
    vertical-align: bottom;
`

const Cell = styled.td`
    padding: 0;
    border-right: 1px solid #c0c0c0;
    border-bottom: 1px solid ${(p) => (p.$edge ? '#000' : '#c0c0c0')};
`

const HeadCell = styled.td`
    padding: 0;
    overflow: hidden;
    border: solid #000;
    border-width: 1px ${(p) => (p.$last ? 2 : 1)}px 2px 0;
    background: #ff99cc;
    color: #f000f0;
    font-size: 16px;
    font-weight: bold;
    line-height: 18px;
    text-align: center;
    white-space: nowrap;
`

const NumberCell = styled.td`
    padding: 0 2px 0 0;
    border-right: 1px solid #000;
    border-bottom: 1px solid #f080c0;
    background: #ff99cc;
    color: #f000f0;
    font-size: 16px;
    line-height: 18px;
    text-align: right;
`

const DataCell = styled.td`
    padding: 0 3px 1px 2px;
    overflow: hidden;
    border-right: 1px solid #000;
    border-bottom: 1px solid #000;
    font-size: 11px;
    font-weight: bold;
    line-height: 14px;
    text-align: ${(p) => (p.$right ? 'right' : 'left')};
    vertical-align: bottom;
    white-space: nowrap;
`

const SelectedCell = styled(Cell)`
    position: relative;
`

const Selection = styled.div`
    position: absolute;
    inset: -2px;
    border: 3px solid #000;

    &::after {
        content: '';
        position: absolute;
        right: -4px;
        bottom: -4px;
        width: 5px;
        height: 5px;
        border: 1px solid #fff;
        border-width: 1px 0 0 1px;
        background: #000;
    }
`

const VerticalScroll = styled.div`
    display: flex;
    flex-direction: column;
    width: 16px;
`

const SplitBox = styled.div`
    ${raised}
    height: 5px;
    margin: 2px 0 0;
`

const ScrollButton = styled.button`
    ${raised}
    display: flex;
    align-items: center;
    justify-content: center;
    flex: none;
    width: 16px;
    height: 16px;
    background: #d4d0c8;
`

const Thumb = styled.div`
    ${raised}
    flex: 1;
`

const Track = styled.div`
    ${checker}
    flex: none;
    width: ${(p) => (p.$wide ? 32 : 16)}px;
    height: 16px;
`

const TabBar = styled.div`
    display: flex;
    flex: none;
    height: 17px;
    padding: 0 17px 1px 2px;
    border-top: 1px solid #808080;
    border-bottom: 1px solid #fff;
`

const TabArrow = styled.button`
    ${raised}
    display: flex;
    align-items: center;
    justify-content: center;
    width: 15px;
`

const TabEdge = styled.svg`
    width: 10px;
    height: 15px;
    flex: none;
    fill: none;
    stroke: #000;

    .paper {
        fill: #fff;
        stroke: none;
    }
`

const Tab = styled.button`
    padding: 0 2px;
    line-height: 14px;
    ${(p) => p.$active && css`
        background: #fff;
        font-weight: bold;
    `}
`

const TabSpace = styled.div`
    flex: 1;
`

const Sash = styled.div`
    ${raised}
    flex: none;
    width: 5px;
`

const ScrollSide = styled.div`
    display: flex;
    width: 39%;

    ${ScrollButton}, ${Track} {
        height: 14px;
    }
`

const StatusBar = styled.footer`
    display: flex;
    align-items: center;
    flex: none;
    gap: 2px;
    height: 21px;
    padding: 0 5px 0 6px;
    border-top: 1px solid #fff;
    font-size: 12px;
`

const StatusText = styled.span`
    flex: 1;
`

const StatusBox = styled.div`
    ${sunken}
    flex: none;
    width: ${(p) => p.$width}px;
    height: 16px;
    line-height: 14px;
    text-align: center;
    white-space: nowrap;
`

const Taskbar = styled.div`
    display: flex;
    align-items: center;
    flex: none;
    height: 26px;
    padding: 0 2px;
    border-top: 1px solid #fff;
`

const StartButton = styled.button`
    ${raised}
    display: flex;
    align-items: center;
    gap: 1px;
    height: 22px;
    padding: 0 3px;
    font-weight: bold;
`

const QuickLaunch = styled.div`
    display: flex;
    width: 196px;
`

const TaskButton = styled.button`
    ${raised}
    display: flex;
    align-items: center;
    gap: 1px;
    width: 160px;
    height: 22px;
    margin-right: 3px;
    padding-left: 3px;
    white-space: nowrap;
    ${(p) => p.$active && css`
        ${checker}
        border-color: #404040 #fff #fff #404040;
        box-shadow: inset 1px 1px 0 #808080;
        font-weight: bold;
    `}
`

const Tray = styled.div`
    ${sunken}
    display: flex;
    align-items: center;
    gap: 2px;
    height: 22px;
    margin-left: auto;
    padding: 0 12px 0 3px;
`

const Clock = styled.time`
    margin-left: 12px;
`

export default App
